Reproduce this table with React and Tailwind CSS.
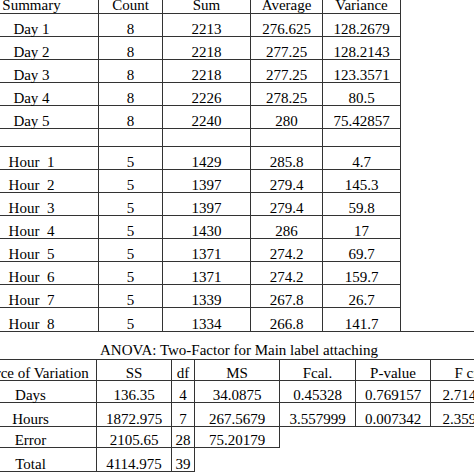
const summary = [
  ["Day 1", "8", "2213", "276.625", "128.2679"],
  ["Day 2", "8", "2218", "277.25", "128.2143"],
  ["Day 3", "8", "2218", "277.25", "123.3571"],
  ["Day 4", "8", "2226", "278.25", "80.5"],
  ["Day 5", "8", "2240", "280", "75.42857"],
  null,
  ["Hour  1", "5", "1429", "285.8", "4.7"],
  ["Hour  2", "5", "1397", "279.4", "145.3"],
  ["Hour  3", "5", "1397", "279.4", "59.8"],
  ["Hour  4", "5", "1430", "286", "17"],
  ["Hour  5", "5", "1371", "274.2", "69.7"],
  ["Hour  6", "5", "1371", "274.2", "159.7"],
  ["Hour  7", "5", "1339", "267.8", "26.7"],
  ["Hour  8", "5", "1334", "266.8", "141.7"],
];

const topWidths = ["w-[134px]", "w-[64px]", "w-[88px]", "w-[72px]", "w-[78px]"];
const botWidths = ["w-[132px]", "w-[75px]", "w-[23px]", "w-[85px]", "w-[76px]", "w-[75px]", "w-[80px]"];

const anova = [
  { h: "h-[22px]", cells: ["Source of Variation", "SS", "df", "MS", "Fcal.", "P-value", "F crit"] },
  { h: "h-[22px]", cells: ["Days", "136.35", "4", "34.0875", "0.45328", "0.769157", "2.714076"] },
  { h: "h-[24px]", cells: ["Hours", "1872.975", "7", "267.5679", "3.557999", "0.007342", "2.359258"] },
  { h: "h-[21px]", cells: ["Error", "2105.65", "28", "75.20179"] },
  { h: "h-[24px]", cells: ["Total", "4114.975", "39"] },
];

function Cell({ w, children, extra = "" }) {
  return (
    <div className={`${w} shrink-0 border-r border-[#333] flex items-end justify-center whitespace-pre ${extra}`}>
      {children}
    </div>
  );
}

export default function App() {
  return (
    <div className="w-[474px] h-[474px] overflow-hidden bg-white text-black text-[15px] leading-[14px] font-['Liberation_Serif',serif]">
      {/* summary table */}
      <div className="mt-[-9px] w-[474px] border-b border-[#333]">
        <div className="ml-[-35px] flex flex-col">
          <div className="flex h-[23px] border-b border-[#333] w-[436px]">
            {["Summary", "Count", "Sum", "Average", "Variance"].map((t, i) => (
              <Cell key={i} w={topWidths[i]} extra="pb-[1px]">{t}</Cell>
            ))}
          </div>
          {summary.map((row, r) => {
            const last = r === summary.length - 1;
            const cls = `flex w-[436px] ${row ? "h-[23px]" : "h-[18px]"} ${last ? "" : "border-b border-[#333]"}`;
            return (
              <div key={r} className={cls}>
                {(row || ["", "", "", "", ""]).map((t, i) => (
                  <Cell key={i} w={topWidths[i]}>{t}</Cell>
                ))}
              </div>
            );
          })}
        </div>
      </div>

      {/* caption */}
      <div className="h-[27px] flex items-end justify-center pb-[2px] pl-[4px]">
        ANOVA: Two-Factor for Main label attaching
      </div>

      {/* anova table */}
      <div className="ml-[-35px] flex flex-col">
        {anova.map((row, r) => {
          const n = row.cells.length;
          const width = n === 7 ? "w-[546px]" : n === 4 ? "w-[315px]" : "w-[230px]";
          return (
            <div
              key={r}
              className={`flex ${row.h} ${r === 0 ? "border-t" : ""} border-b border-[#333] ${width}`}
            >
              {row.cells.map((t, i) => (
                <Cell key={i} w={botWidths[i]}>{t}</Cell>
              ))}
            </div>
          );
        })}
      </div>
    </div>
  );
}
